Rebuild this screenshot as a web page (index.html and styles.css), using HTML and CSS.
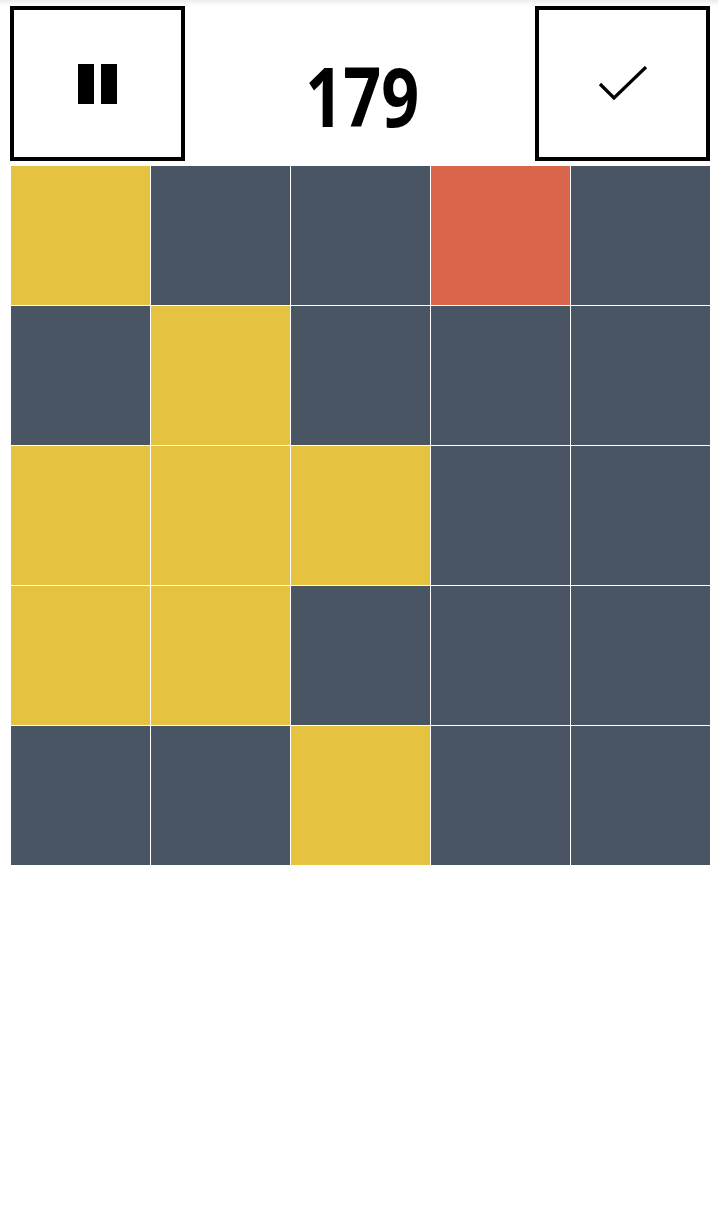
FILE: index.html
```html
<!DOCTYPE html>
<html>
<head>
<meta charset="utf-8">
<link rel="stylesheet" href="styles.css">
</head>
<body>
<div class="topshade"></div>
<header class="bar">
  <button class="box" aria-label="pause">
    <svg width="40" height="40" viewBox="0 0 40 40"><rect x="0" y="0" width="16" height="40" fill="#000"/><rect x="23" y="0" width="16" height="40" fill="#000"/></svg>
  </button>
  <div class="score"><span class="num">179</span></div>
  <button class="box" aria-label="done">
    <svg width="50" height="36" viewBox="0 0 50 36"><path d="M2 18 L16 32 L48 1" fill="none" stroke="#000" stroke-width="3.2"/></svg>
  </button>
</header>
<main class="grid">
  <div class="cell y"></div><div class="cell d"></div><div class="cell d"></div><div class="cell o"></div><div class="cell d"></div>
  <div class="cell d"></div><div class="cell y"></div><div class="cell d"></div><div class="cell d"></div><div class="cell d"></div>
  <div class="cell y"></div><div class="cell y"></div><div class="cell y"></div><div class="cell d"></div><div class="cell d"></div>
  <div class="cell y"></div><div class="cell y"></div><div class="cell d"></div><div class="cell d"></div><div class="cell d"></div>
  <div class="cell d"></div><div class="cell d"></div><div class="cell y"></div><div class="cell d"></div><div class="cell d"></div>
</main>
</body>
</html>
```
FILE: styles.css
```css
html, body {
  margin: 0;
  padding: 0;
  background: #fff;
}
body {
  position: relative;
  width: 718px;
  height: 1226px;
  font-family: "Open Sans", "DejaVu Sans", sans-serif;
}
.topshade {
  position: absolute;
  left: 0;
  top: 0;
  width: 100%;
  height: 6px;
  background: linear-gradient(#ececec, rgba(255,255,255,0));
}
.bar {
  display: flex;
  justify-content: space-between;
  align-items: flex-start;
  padding: 6px 8px 0 10px;
}
.box {
  box-sizing: border-box;
  width: 175px;
  height: 155px;
  border: 4px solid #000;
  background: #fff;
  padding: 0;
  margin: 0;
  display: flex;
  align-items: center;
  justify-content: center;
}
.score {
  flex: 1;
  height: 155px;
  display: flex;
  justify-content: center;
  align-items: center;
}
.num {
  display: inline-block;
  font-weight: 700;
  font-size: 83px;
  line-height: 1;
  color: #000;
  transform: scaleX(0.8);
  margin-top: 21px;
  margin-left: 4px;
}
.grid {
  display: grid;
  grid-template-columns: repeat(5, 139px);
  grid-auto-rows: 139px;
  gap: 1px;
  margin: 5px 0 0 11px;
  width: 699px;
}
.y { background: #e5c340; }
.d { background: #4a5563; }
.o { background: #d9654a; }
```
